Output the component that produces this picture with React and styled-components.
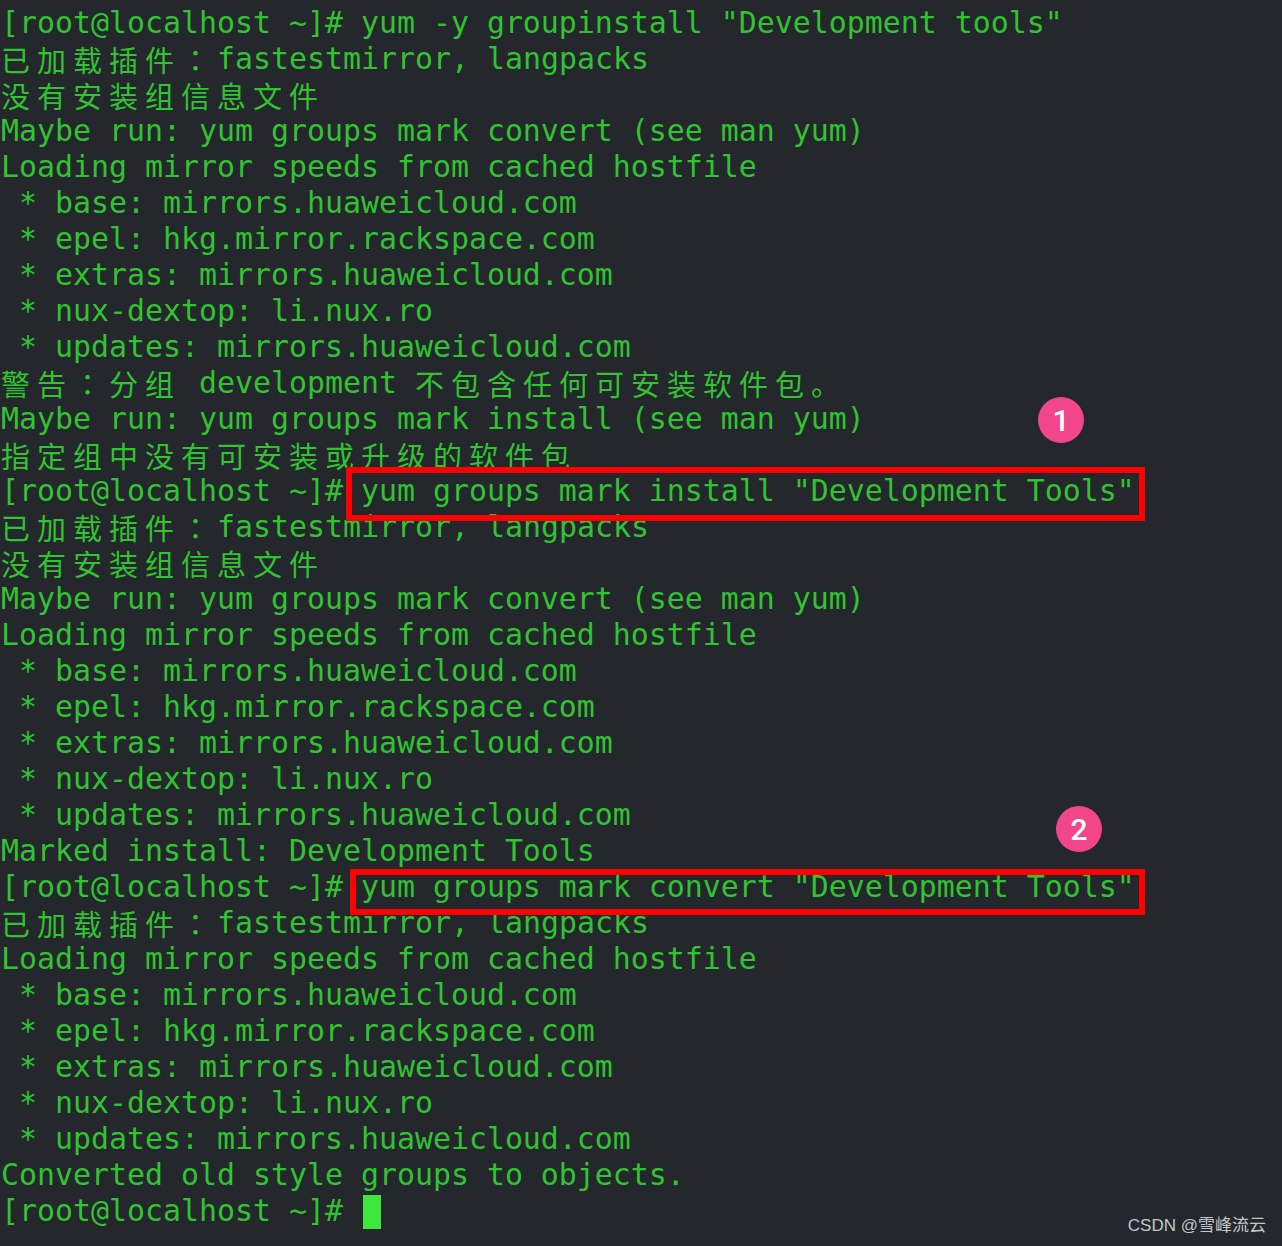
import styled, { createGlobalStyle } from "styled-components";

const GlobalStyle = createGlobalStyle`
  html, body {
    margin: 0;
    padding: 0;
    background: #24272b;
  }
`;

const PROMPT = "[root@localhost ~]# ";

const lines = [
  PROMPT + 'yum -y groupinstall "Development tools"',
  "已加载插件：fastestmirror, langpacks",
  "没有安装组信息文件",
  "Maybe run: yum groups mark convert (see man yum)",
  "Loading mirror speeds from cached hostfile",
  " * base: mirrors.huaweicloud.com",
  " * epel: hkg.mirror.rackspace.com",
  " * extras: mirrors.huaweicloud.com",
  " * nux-dextop: li.nux.ro",
  " * updates: mirrors.huaweicloud.com",
  "警告：分组 development 不包含任何可安装软件包。",
  "Maybe run: yum groups mark install (see man yum)",
  "指定组中没有可安装或升级的软件包",
  PROMPT + 'yum groups mark install "Development Tools"',
  "已加载插件：fastestmirror, langpacks",
  "没有安装组信息文件",
  "Maybe run: yum groups mark convert (see man yum)",
  "Loading mirror speeds from cached hostfile",
  " * base: mirrors.huaweicloud.com",
  " * epel: hkg.mirror.rackspace.com",
  " * extras: mirrors.huaweicloud.com",
  " * nux-dextop: li.nux.ro",
  " * updates: mirrors.huaweicloud.com",
  "Marked install: Development Tools",
  PROMPT + 'yum groups mark convert "Development Tools"',
  "已加载插件：fastestmirror, langpacks",
  "Loading mirror speeds from cached hostfile",
  " * base: mirrors.huaweicloud.com",
  " * epel: hkg.mirror.rackspace.com",
  " * extras: mirrors.huaweicloud.com",
  " * nux-dextop: li.nux.ro",
  " * updates: mirrors.huaweicloud.com",
  "Converted old style groups to objects.",
];

// CJK runs are two cells wide; punctuation gets the centred JP forms
const WIDE = /([\u4e00-\u9fff]+|[\u3000-\u303f\uff00-\uffef]+)/;
const splitWide = (text) => text.split(WIDE).filter(Boolean);
const isHan = (s) => /[\u4e00-\u9fff]/.test(s);
const isPunct = (s) => /[\u3000-\u303f\uff00-\uffef]/.test(s);

const TermLine = ({ text, children }) => (
  <Line>
    {splitWide(text).map((part, i) => {
      if (isHan(part)) return <Wide key={i}>{part}</Wide>;
      if (isPunct(part)) return <Punct key={i}>{part}</Punct>;
      return <span key={i}>{part}</span>;
    })}
    {children}
  </Line>
);

const App = () => {
  return (
    <>
      <GlobalStyle />
      <Screen>
        {lines.map((l, i) => (
          <TermLine key={i} text={l} />
        ))}
        <TermLine text={PROMPT}>
          <Cursor />
        </TermLine>

        <Mark $left={346} $top={467} $width={799} $height={54} />
        <Mark $left={350} $top={869} $width={795} $height={46} />
        <Badge $x={1061} $y={420}>1</Badge>
        <Badge $x={1079} $y={829}>2</Badge>
        <Watermark>CSDN @雪峰流云</Watermark>
      </Screen>
    </>
  );
};

export default App;

const Screen = styled.div`
  position: relative;
  width: 1282px;
  height: 1246px;
  box-sizing: border-box;
  padding: 5px 0 0 1px;
  background: #24272b;
  color: #31c331;
  font-family: "DejaVu Sans Mono", "Noto Sans CJK SC", monospace;
  font-size: 29.9px;
  overflow: hidden;
  display: flex;
  flex-direction: column;
`;

const Line = styled.div`
  height: 36px;
  line-height: 36px;
  white-space: pre;
  display: flex;
  align-items: center;
`;

const Wide = styled.span`
  font-family: "Noto Sans CJK SC", sans-serif;
  font-size: 29px;
  letter-spacing: 7px;
  font-weight: 400;
`;

const Punct = styled(Wide)`
  font-family: "Noto Sans CJK JP", sans-serif;
`;

const Cursor = styled.span`
  display: inline-block;
  width: 18px;
  height: 34px;
  background: #3ee63e;
  margin: 1px 0 0 2px;
`;

const Mark = styled.div`
  position: absolute;
  left: ${(p) => p.$left}px;
  top: ${(p) => p.$top}px;
  width: ${(p) => p.$width}px;
  height: ${(p) => p.$height}px;
  box-sizing: border-box;
  border: 6px solid #ff0000;
`;

const Badge = styled.div`
  position: absolute;
  left: ${(p) => p.$x - 23}px;
  top: ${(p) => p.$y - 23}px;
  width: 46px;
  height: 46px;
  border-radius: 50%;
  background: #f2468a;
  color: #ffffff;
  font-family: "Roboto", "Liberation Sans", sans-serif;
  font-size: 30px;
  font-weight: 500;
  display: flex;
  align-items: center;
  justify-content: center;
`;

const Watermark = styled.div`
  position: absolute;
  right: 16px;
  bottom: 10px;
  color: #c4c6c8;
  font-family: "Liberation Sans", "Noto Sans CJK SC", sans-serif;
  font-size: 17px;
`;
